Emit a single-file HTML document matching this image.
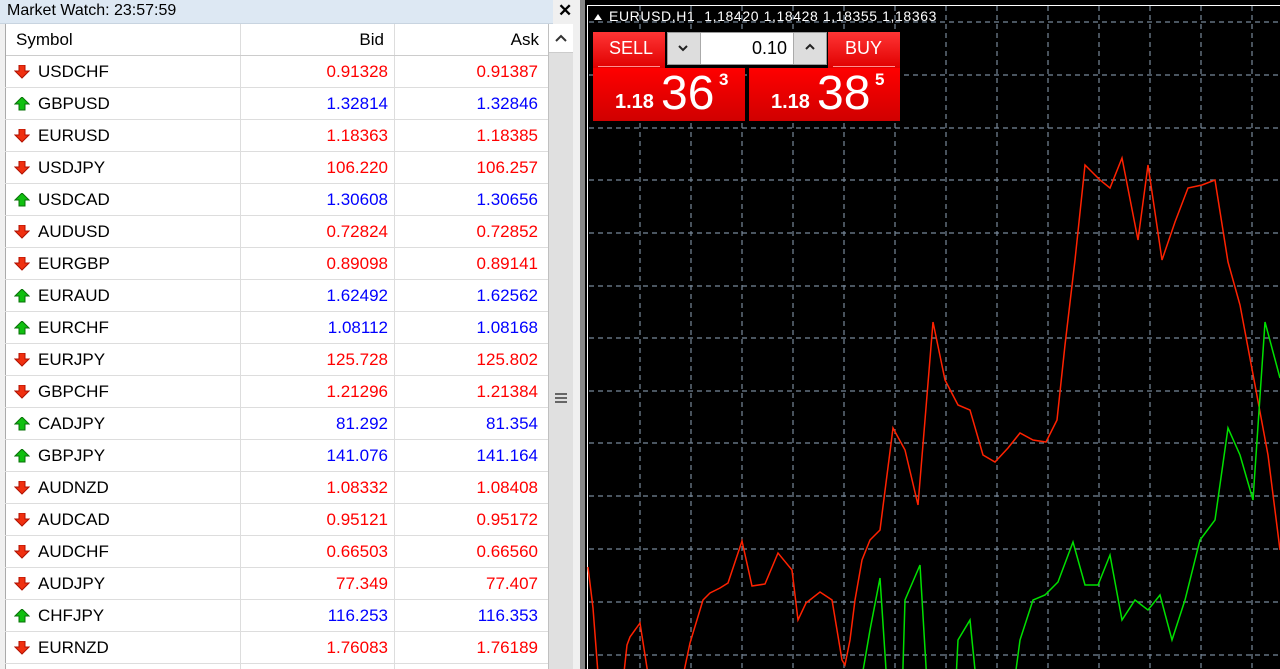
<!DOCTYPE html>
<html><head><meta charset="utf-8"><style>
body{margin:0;width:1280px;height:669px;overflow:hidden;background:#f0f0f0;font-family:"Liberation Sans",sans-serif;position:relative}
.t{position:absolute;left:0;top:0;width:553px;height:23px;background:#dde8f3;border-bottom:1px solid #c8d4e0}
.t span{position:absolute;left:7px;top:2px;font-size:16px;color:#000}
.x{position:absolute;left:558px;top:1px;font-size:17px;font-weight:bold}
.tbl{position:absolute;left:5px;top:24px;width:543px;height:645px;background:#fff;border-left:1px solid #aaa}
.row{position:absolute;left:0;width:543px;height:31px;border-bottom:1px solid #ddd;font-size:17px}
.row div{position:absolute;top:6px}
.s{left:33px;color:#000}
.b{right:160px;text-align:right}
.a{right:10px;text-align:right}
.c1,.c2{position:absolute;top:0;height:645px;width:1px;background:#ddd}
.ic{position:absolute;left:9px;top:9px}
.sb{position:absolute;left:548px;top:24px;width:24px;height:645px;background:#e0e0e0;border-left:1px solid #c0c0c0}
.sbb{position:absolute;left:0;top:0;width:24px;height:28px;background:#fff;border-bottom:1px solid #ccc}
.chart{position:absolute;left:585px;top:0;width:695px;height:669px;background:#000}
</style></head><body>
<div class="t"><span>Market Watch: 23:57:59</span></div>
<div class="x">✕</div>
<div class="tbl">
<div class="c1" style="left:234px"></div><div class="c2" style="left:388px"></div>
<div class="row" style="top:0;height:31px;border-bottom:1px solid #ccc"><div style="left:10px">Symbol</div><div class="b" style="right:165px">Bid</div><div class="a">Ask</div></div>
</div>
<div class="sb"><div class="sbb"><svg width="24" height="28"><path d="M7 17 L12 12 L17 17" stroke="#333" stroke-width="2" fill="none"/></svg></div>
<svg style="position:absolute;left:6px;top:369px" width="12" height="12"><rect y="0" width="12" height="2" fill="#666"/><rect y="4" width="12" height="2" fill="#666"/><rect y="8" width="12" height="2" fill="#666"/></svg></div>
<div style="position:absolute;left:580px;top:0;width:5px;height:669px;background:#888"></div>
<div class="chart">
<svg width="695" height="669" style="position:absolute;left:0;top:0">
<line x1="2.5" y1="5" x2="2.5" y2="669" stroke="#fff"/>
<line x1="2" y1="5.5" x2="695" y2="5.5" stroke="#fff"/>
<g stroke="#778899" stroke-dasharray="5,4" stroke-width="1.2">
<line x1="4" y1="22" x2="695" y2="22"/><line x1="4" y1="75" x2="695" y2="75"/><line x1="4" y1="128" x2="695" y2="128"/><line x1="4" y1="180" x2="695" y2="180"/><line x1="4" y1="233" x2="695" y2="233"/><line x1="4" y1="286" x2="695" y2="286"/><line x1="4" y1="338" x2="695" y2="338"/><line x1="4" y1="391" x2="695" y2="391"/><line x1="4" y1="443" x2="695" y2="443"/><line x1="4" y1="496" x2="695" y2="496"/><line x1="4" y1="549" x2="695" y2="549"/><line x1="4" y1="602" x2="695" y2="602"/><line x1="4" y1="655" x2="695" y2="655"/>
<line x1="55" y1="6" x2="55" y2="669"/><line x1="106" y1="6" x2="106" y2="669"/><line x1="157" y1="6" x2="157" y2="669"/><line x1="208" y1="6" x2="208" y2="669"/><line x1="259" y1="6" x2="259" y2="669"/><line x1="310" y1="6" x2="310" y2="669"/><line x1="361" y1="6" x2="361" y2="669"/><line x1="412" y1="6" x2="412" y2="669"/><line x1="463" y1="6" x2="463" y2="669"/><line x1="514" y1="6" x2="514" y2="669"/><line x1="565" y1="6" x2="565" y2="669"/><line x1="616" y1="6" x2="616" y2="669"/><line x1="667" y1="6" x2="667" y2="669"/>
</g>
<g transform="translate(-585,0)" fill="none" stroke-width="1.5">
<polyline stroke="#ff2200" points="588,567 593,608 600,700 621,700 627,645 630,637 640,623 645,655 652,700 678,700 690,643 703,600 710,593 720,588 728,583 742,541 752,586 765,584 778,553 792,570 798,620 806,603 820,592 832,600 842,660 845,665 850,640 855,600 862,560 870,540 880,530 893,428 905,450 918,505 925,420 933,322 945,380 958,405 970,410 983,455 995,462 1008,448 1020,433 1033,440 1046,442 1057,420 1065,345 1075,260 1085,165 1100,180 1110,188 1122,158 1138,240 1148,165 1162,260 1175,222 1188,188 1202,185 1215,180 1228,262 1240,305 1255,385 1268,455 1280,550"/>
<polyline stroke="#00e000" points="858,700 870,630 880,578 888,700 902,700 905,600 920,565 928,700 955,700 958,640 970,620 978,700 1012,700 1020,640 1033,600 1045,595 1058,582 1073,542 1085,585 1098,585 1110,555 1122,620 1135,600 1148,610 1160,595 1172,640 1185,600 1200,540 1215,520 1228,428 1240,455 1253,500 1265,322 1280,378"/>
</g>
<polygon points="9,20 13,14 17,20" fill="#fff"/>
<text x="24" y="21" fill="#fff" font-size="14" letter-spacing="0.6" font-family="Liberation Sans" xml:space="preserve">EURUSD,H1  1,18420 1,18428 1,18355 1,18363</text>
</svg>
<div style="position:absolute;left:8px;top:32px;width:72px;height:36px;background:linear-gradient(#ff3535,#e00000)"><div style="position:absolute;left:16px;top:6px;color:#fff;font-size:18px">SELL</div><div style="position:absolute;left:5px;right:5px;top:34px;height:1px;background:#ff9090"></div></div>
<div style="position:absolute;left:243px;top:32px;width:72px;height:36px;background:linear-gradient(#ff3535,#e00000)"><div style="position:absolute;left:17px;top:6px;color:#fff;font-size:18px">BUY</div><div style="position:absolute;left:5px;right:5px;top:34px;height:1px;background:#ff9090"></div></div>
<div style="position:absolute;left:82px;top:32px;width:158px;height:31px;background:#ddd;border:1px solid #999">
<div style="position:absolute;left:32px;top:0;width:92px;height:31px;background:#fff;border-left:1px solid #aaa;border-right:1px solid #aaa"><div style="position:absolute;right:6px;top:5px;font-size:18px">0.10</div></div>
<svg style="position:absolute;left:9px;top:11px" width="12" height="8"><path d="M2 2 L6 6 L10 2" stroke="#222" stroke-width="2" fill="none"/></svg>
<svg style="position:absolute;left:136px;top:10px" width="12" height="8"><path d="M2 6 L6 2 L10 6" stroke="#222" stroke-width="2" fill="none"/></svg></div>
<div style="position:absolute;left:8px;top:68px;width:152px;height:53px;background:linear-gradient(#f00,#d00000);color:#fff">
<span style="position:absolute;left:22px;top:23px;font-size:20px;font-weight:bold">1.18</span><span style="position:absolute;left:68px;top:-2px;font-size:48px">36</span><span style="position:absolute;left:126px;top:2px;font-size:17px;font-weight:bold">3</span></div>
<div style="position:absolute;left:164px;top:68px;width:151px;height:53px;background:linear-gradient(#f00,#d00000);color:#fff">
<span style="position:absolute;left:22px;top:23px;font-size:20px;font-weight:bold">1.18</span><span style="position:absolute;left:68px;top:-2px;font-size:48px">38</span><span style="position:absolute;left:126px;top:2px;font-size:17px;font-weight:bold">5</span></div>
</div>
<div style="position:absolute;left:5px;top:24px;width:543px;height:645px">
<div class="row" style="top:32px"><svg class="ic" width="16" height="14"><path d="M5 0H11V6H15L8 13L1 6H5Z" fill="#f03010" stroke="#b01000"/></svg><div class="s">USDCHF</div><div class="b" style="color:#f00">0.91328</div><div class="a" style="color:#f00">0.91387</div></div>
<div class="row" style="top:64px"><svg class="ic" width="16" height="14"><path d="M5 13H11V7H15L8 0L1 7H5Z" fill="#10c010" stroke="#087008"/></svg><div class="s">GBPUSD</div><div class="b" style="color:#00f">1.32814</div><div class="a" style="color:#00f">1.32846</div></div>
<div class="row" style="top:96px"><svg class="ic" width="16" height="14"><path d="M5 0H11V6H15L8 13L1 6H5Z" fill="#f03010" stroke="#b01000"/></svg><div class="s">EURUSD</div><div class="b" style="color:#f00">1.18363</div><div class="a" style="color:#f00">1.18385</div></div>
<div class="row" style="top:128px"><svg class="ic" width="16" height="14"><path d="M5 0H11V6H15L8 13L1 6H5Z" fill="#f03010" stroke="#b01000"/></svg><div class="s">USDJPY</div><div class="b" style="color:#f00">106.220</div><div class="a" style="color:#f00">106.257</div></div>
<div class="row" style="top:160px"><svg class="ic" width="16" height="14"><path d="M5 13H11V7H15L8 0L1 7H5Z" fill="#10c010" stroke="#087008"/></svg><div class="s">USDCAD</div><div class="b" style="color:#00f">1.30608</div><div class="a" style="color:#00f">1.30656</div></div>
<div class="row" style="top:192px"><svg class="ic" width="16" height="14"><path d="M5 0H11V6H15L8 13L1 6H5Z" fill="#f03010" stroke="#b01000"/></svg><div class="s">AUDUSD</div><div class="b" style="color:#f00">0.72824</div><div class="a" style="color:#f00">0.72852</div></div>
<div class="row" style="top:224px"><svg class="ic" width="16" height="14"><path d="M5 0H11V6H15L8 13L1 6H5Z" fill="#f03010" stroke="#b01000"/></svg><div class="s">EURGBP</div><div class="b" style="color:#f00">0.89098</div><div class="a" style="color:#f00">0.89141</div></div>
<div class="row" style="top:256px"><svg class="ic" width="16" height="14"><path d="M5 13H11V7H15L8 0L1 7H5Z" fill="#10c010" stroke="#087008"/></svg><div class="s">EURAUD</div><div class="b" style="color:#00f">1.62492</div><div class="a" style="color:#00f">1.62562</div></div>
<div class="row" style="top:288px"><svg class="ic" width="16" height="14"><path d="M5 13H11V7H15L8 0L1 7H5Z" fill="#10c010" stroke="#087008"/></svg><div class="s">EURCHF</div><div class="b" style="color:#00f">1.08112</div><div class="a" style="color:#00f">1.08168</div></div>
<div class="row" style="top:320px"><svg class="ic" width="16" height="14"><path d="M5 0H11V6H15L8 13L1 6H5Z" fill="#f03010" stroke="#b01000"/></svg><div class="s">EURJPY</div><div class="b" style="color:#f00">125.728</div><div class="a" style="color:#f00">125.802</div></div>
<div class="row" style="top:352px"><svg class="ic" width="16" height="14"><path d="M5 0H11V6H15L8 13L1 6H5Z" fill="#f03010" stroke="#b01000"/></svg><div class="s">GBPCHF</div><div class="b" style="color:#f00">1.21296</div><div class="a" style="color:#f00">1.21384</div></div>
<div class="row" style="top:384px"><svg class="ic" width="16" height="14"><path d="M5 13H11V7H15L8 0L1 7H5Z" fill="#10c010" stroke="#087008"/></svg><div class="s">CADJPY</div><div class="b" style="color:#00f">81.292</div><div class="a" style="color:#00f">81.354</div></div>
<div class="row" style="top:416px"><svg class="ic" width="16" height="14"><path d="M5 13H11V7H15L8 0L1 7H5Z" fill="#10c010" stroke="#087008"/></svg><div class="s">GBPJPY</div><div class="b" style="color:#00f">141.076</div><div class="a" style="color:#00f">141.164</div></div>
<div class="row" style="top:448px"><svg class="ic" width="16" height="14"><path d="M5 0H11V6H15L8 13L1 6H5Z" fill="#f03010" stroke="#b01000"/></svg><div class="s">AUDNZD</div><div class="b" style="color:#f00">1.08332</div><div class="a" style="color:#f00">1.08408</div></div>
<div class="row" style="top:480px"><svg class="ic" width="16" height="14"><path d="M5 0H11V6H15L8 13L1 6H5Z" fill="#f03010" stroke="#b01000"/></svg><div class="s">AUDCAD</div><div class="b" style="color:#f00">0.95121</div><div class="a" style="color:#f00">0.95172</div></div>
<div class="row" style="top:512px"><svg class="ic" width="16" height="14"><path d="M5 0H11V6H15L8 13L1 6H5Z" fill="#f03010" stroke="#b01000"/></svg><div class="s">AUDCHF</div><div class="b" style="color:#f00">0.66503</div><div class="a" style="color:#f00">0.66560</div></div>
<div class="row" style="top:544px"><svg class="ic" width="16" height="14"><path d="M5 0H11V6H15L8 13L1 6H5Z" fill="#f03010" stroke="#b01000"/></svg><div class="s">AUDJPY</div><div class="b" style="color:#f00">77.349</div><div class="a" style="color:#f00">77.407</div></div>
<div class="row" style="top:576px"><svg class="ic" width="16" height="14"><path d="M5 13H11V7H15L8 0L1 7H5Z" fill="#10c010" stroke="#087008"/></svg><div class="s">CHFJPY</div><div class="b" style="color:#00f">116.253</div><div class="a" style="color:#00f">116.353</div></div>
<div class="row" style="top:608px"><svg class="ic" width="16" height="14"><path d="M5 0H11V6H15L8 13L1 6H5Z" fill="#f03010" stroke="#b01000"/></svg><div class="s">EURNZD</div><div class="b" style="color:#f00">1.76083</div><div class="a" style="color:#f00">1.76189</div></div>
</div>
</body></html>
